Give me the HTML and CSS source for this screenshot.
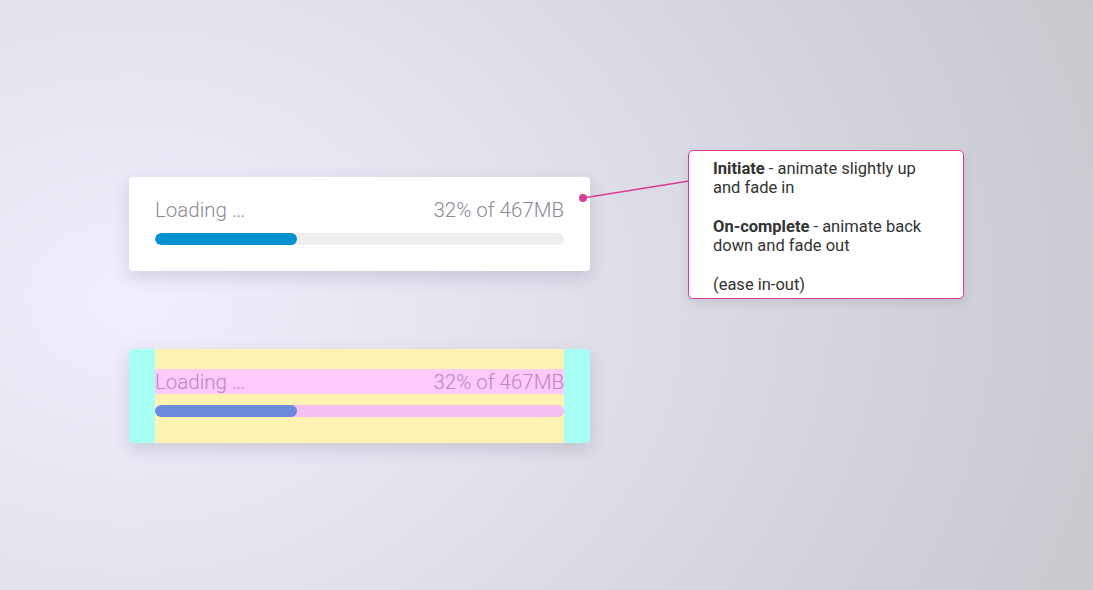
FILE: index.html
```html
<!DOCTYPE html>
<html lang="en">
<head>
    <meta charset="UTF-8">
    <meta name="viewport" content="width=device-width, initial-scale=1.0">
    <title>Loading bar spec</title>
    <link rel="stylesheet" href="styles.css">
</head>
<body>

    <div class="stage">
        <div class="cards">
            <!-- the loading bar as designed -->
            <div class="card">
                <div class="row">
                    <span>Loading …</span>
                    <span>32% of 467MB</span>
                </div>
                <div class="track">
                    <div class="fill" style="width: 34.7%;"></div>
                </div>
            </div>

            <!-- same bar with spacing overlay -->
            <div class="card card-spacing">
                <div class="inner">
                    <div class="row">
                        <span>Loading …</span>
                        <span>32% of 467MB</span>
                    </div>
                    <div class="track">
                        <div class="fill" style="width: 34.7%;"></div>
                    </div>
                </div>
            </div>
        </div>

        <svg class="connector" width="1093" height="590" viewBox="0 0 1093 590">
            <line x1="583" y1="198" x2="689" y2="181" stroke="#d83c93" stroke-width="1.3"/>
            <circle cx="583" cy="198" r="4" fill="#d83c93"/>
        </svg>

        <div class="note">
            <p><b>Initiate</b> - animate slightly up and fade in</p>
            <p><b>On-complete</b> - animate back down and fade out</p>
            <p>(ease in-out)</p>
        </div>
    </div>

</body>
</html>
```

FILE: styles.css
```css
html, body {
    margin: 0;
    padding: 0;
    height: 100%;
}

body {
    font-family: Roboto, "Liberation Sans", sans-serif;
    background: radial-gradient(ellipse 1150px 900px at 130px 300px, #f0effb 0%, #e2e2ed 35%, #d3d3dc 65%, #c4c4ca 100%);
    overflow: hidden;
}

.stage {
    position: relative;
    width: 1093px;
    height: 590px;
}

.cards {
    display: flex;
    flex-direction: column;
    gap: 78px;
    padding: 177px 0 0 129px;
    width: 461px;
}

.card {
    background-color: #fff;
    border-radius: 4px;
    box-shadow: 0 6px 16px rgba(60, 60, 90, 0.17);
    padding: 20px 26px 26px;
}

.row {
    display: flex;
    justify-content: space-between;
    height: 24px;
    padding-top: 1px;
    line-height: 25px;
    font-size: 20.5px;
    font-weight: 300;
    color: #8a8a96;
}

.track {
    margin-top: 11px;
    height: 12px;
    border-radius: 6px;
    background-color: #efefef;
    overflow: hidden;
}

.fill {
    height: 100%;
    border-radius: 6px;
    background-color: #0392cf;
}

/* spacing overlay */
.card-spacing {
    background-color: #a6fff2;
    padding: 0 26px;
}

.card-spacing .inner {
    background-color: #fff3b4;
    padding: 20px 0 26px;
}

.card-spacing .row {
    background-color: #fec9fb;
    color: #c086bf;
}

.card-spacing .track {
    background-color: #f4c1f0;
}

.card-spacing .fill {
    background-color: #6b8adc;
}

.connector {
    position: absolute;
    left: 0;
    top: 0;
    pointer-events: none;
}

.note {
    position: absolute;
    left: 688px;
    top: 150px;
    width: 226px;
    padding: 8px 24px 4px 24px;
    background-color: #fff;
    border: 1.5px solid #d83c93;
    border-radius: 5px;
    box-shadow: 0 4px 10px rgba(60, 60, 90, 0.12);
    font-size: 16.5px;
    line-height: 19.33px;
    color: #333;
}

.note p {
    margin: 0 0 19.33px;
}

.note p:last-child {
    margin-bottom: 0;
}
```
